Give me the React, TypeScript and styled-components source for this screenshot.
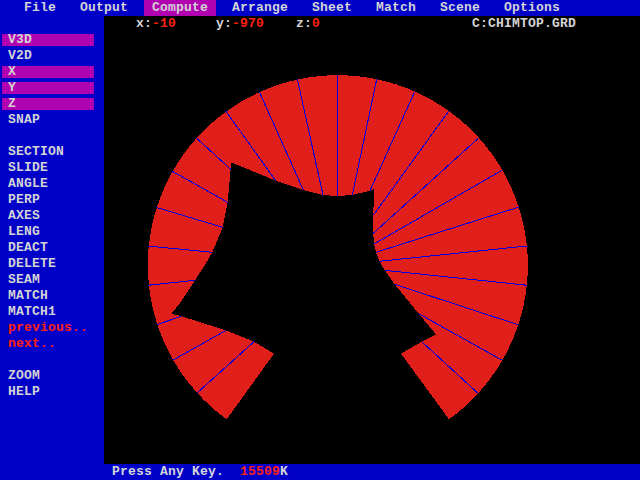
import React from "react";
import styled, { createGlobalStyle } from "styled-components";

const BLUE = "#0000c8";
const PURPLE = "#b000b0";
const RED = "#e01e1a";
const TEXT_RED = "#ff2214";
const GREY = "#d4d4d4";

const Global = createGlobalStyle`
  html, body { margin: 0; padding: 0; background: #000; }
  body { width: 640px; height: 480px; overflow: hidden; }
`;

const Screen = styled.div`
  width: 640px;
  height: 480px;
  display: grid;
  grid-template-columns: 104px 1fr;
  grid-template-rows: 16px 1fr 16px;
  background: #000;
  color: ${GREY};
  font-family: "Liberation Mono", "DejaVu Sans Mono", monospace;
  font-weight: 700;
  font-size: 13px;
  line-height: 16px;
  letter-spacing: 0.2px;
  white-space: pre;
`;

const MenuBar = styled.nav`
  grid-column: 1 / 3;
  display: flex;
  gap: 8px;
  padding-left: 16px;
  background: ${BLUE};
`;

const MenuItem = styled.div<{ $active?: boolean }>`
  padding: 0 8px;
  background: ${(p) => (p.$active ? PURPLE : "transparent")};
`;

const Sidebar = styled.aside`
  grid-row: 2 / 4;
  background: ${BLUE};
  padding: 16px 10px 0 2px;
  display: flex;
  flex-direction: column;
`;

const Tool = styled.div<{ $on?: boolean; $link?: boolean; $gap?: boolean }>`
  height: 16px;
  padding-left: 6px;
  margin-top: ${(p) => (p.$gap ? "16px" : "0")};
  color: ${(p) => (p.$link ? TEXT_RED : GREY)};
  background: ${(p) => (p.$on ? `linear-gradient(${BLUE} 2px, ${PURPLE} 2px, ${PURPLE} 14px, ${BLUE} 14px)` : "transparent")};
`;

const Main = styled.main`
  display: flex;
  flex-direction: column;
  min-height: 0;
`;

const Info = styled.div`
  display: grid;
  grid-template-columns: 32px 80px 80px 176px 1fr;
  height: 16px;
  flex: none;
`;

const Coord = styled.span``;

const Value = styled.span`
  color: ${TEXT_RED};
`;

const Canvas = styled.svg`
  display: block;
  width: 536px;
  height: 432px;
  flex: none;
`;

const Status = styled.footer`
  background: ${BLUE};
  padding-left: 8px;
`;

const spokes: number[][] = [
  [337.5, 75, 337.5, 196],
  [297.3, 79, 323, 195],
  [259.3, 91.7, 303.3, 190],
  [225.7, 111, 275.7, 180.7],
  [196.7, 138.3, 230.7, 169.3],
  [171.7, 171, 227.7, 202.3],
  [156, 207.3, 222.7, 227.3],
  [148, 246, 212.3, 252.3],
  [147.7, 285.3, 195, 280.3],
  [156.7, 324.7, 181.3, 316.3],
  [173.3, 360, 226, 330.3],
  [196.7, 393.3, 254, 341.7],
  [376.7, 79.3, 352.3, 195],
  [414.7, 91.7, 370, 190.7],
  [449, 110.7, 373.3, 215.3],
  [478.3, 138.3, 373.3, 233.3],
  [502, 170.3, 374, 244],
  [519, 207, 376, 252.3],
  [526.7, 246, 379.3, 261.3],
  [527.3, 285.3, 384.7, 270.3],
  [518, 324.7, 394.7, 284.3],
  [502.3, 360.3, 418.7, 313.7],
  [477.7, 393, 421.7, 341.7],
];

const sheet =
  "M226.7 419.3 A190 190 0 1 1 449 419.3 L401 353.7 L421.7 341.7 L436 334.3 L418.7 313.7 L394.7 284.3 L384.7 270.3 " +
  "L379.3 261.3 L376 252.3 L374 244 L373.3 233.3 L373.3 215 L374 189.3 L370 190.7 L352.3 195 L337.5 196 L323 195 " +
  "L303.3 190 L275.7 180.7 L231.5 162.5 L230.7 169.3 L227.7 202.3 L222.7 227.3 L212.3 252.3 L205 265 L195 280.3 " +
  "L180 303 L171.3 314 L178.3 315.3 L181.3 316.3 L226 330.3 L254 341.7 L274 353.7 Z";

const tools: { label: string; on?: boolean; link?: boolean; gap?: boolean }[] = [
  { label: "V3D", on: true },
  { label: "V2D" },
  { label: "X", on: true },
  { label: "Y", on: true },
  { label: "Z", on: true },
  { label: "SNAP" },
  { label: "SECTION", gap: true },
  { label: "SLIDE" },
  { label: "ANGLE" },
  { label: "PERP" },
  { label: "AXES" },
  { label: "LENG" },
  { label: "DEACT" },
  { label: "DELETE" },
  { label: "SEAM" },
  { label: "MATCH" },
  { label: "MATCH1" },
  { label: "previous..", link: true },
  { label: "next..", link: true },
  { label: "ZOOM", gap: true },
  { label: "HELP" },
];

const menus = ["File", "Output", "Compute", "Arrange", "Sheet", "Match", "Scene", "Options"];

export default function App() {
  return (
    <Screen>
      <Global />
      <MenuBar>
        {menus.map((m) => (
          <MenuItem key={m} $active={m === "Compute"}>{m}</MenuItem>
        ))}
      </MenuBar>
      <Sidebar>
        {tools.map((t) => (
          <Tool key={t.label} $on={t.on} $link={t.link} $gap={t.gap}>{t.label}</Tool>
        ))}
      </Sidebar>
      <Main>
        <Info>
          <span />
          <Coord>x:<Value>-10</Value></Coord>
          <Coord>y:<Value>-970</Value></Coord>
          <Coord>z:<Value>0</Value></Coord>
          <Coord>C:CHIMTOP.GRD</Coord>
        </Info>
        <Canvas viewBox="104 32 536 432" shapeRendering="crispEdges">
          <path d={sheet} fill={RED} />
          {spokes.map((s, i) => (
            <line key={i} x1={s[0]} y1={s[1]} x2={s[2]} y2={s[3]} stroke="#0000e0" strokeWidth={1} />
          ))}
        </Canvas>
      </Main>
      <Status>Press Any Key.  <Value>15509</Value>K</Status>
    </Screen>
  );
}
